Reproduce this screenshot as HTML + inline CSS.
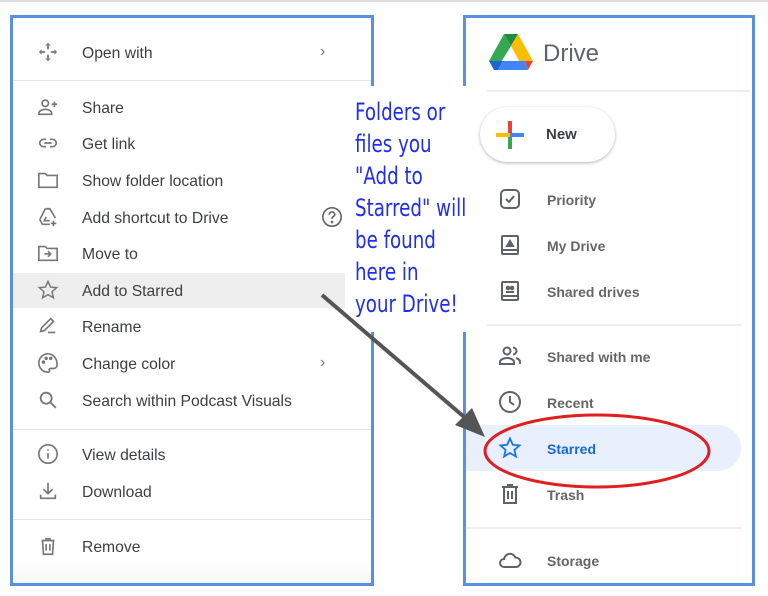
<!DOCTYPE html>
<html><head><meta charset="utf-8"><style>
*{margin:0;padding:0;box-sizing:border-box}
body{width:768px;height:596px;background:#fff;position:relative;overflow:hidden;font-family:"Liberation Sans",Arial,sans-serif}
.abs{position:absolute}
.box{position:absolute;border:3px solid #5b8fe0}
.it{position:absolute;left:82px;font-size:15.7px;color:#3c4043;line-height:18px;margin-top:2px}
.ic{position:absolute;left:37px;width:22px;height:22px;margin-top:1px}
.hr{position:absolute;height:1px;background:#e3e3e3}
.ri{position:absolute;left:547px;font-size:14px;color:#666;font-weight:bold;line-height:18px}
.rc{position:absolute;left:498px;width:24px;height:24px}
.hw{position:absolute;left:355px;font-family:"DejaVu Sans",cursive;font-size:24px;color:#1f2ef0;line-height:32px;transform:scaleX(.76);transform-origin:left;white-space:nowrap}
svg{overflow:visible}
</style></head><body>
<div class="abs" style="left:0;top:0;width:768px;height:2px;background:#ddd"></div>

<div class="box" style="left:10px;top:15px;width:364px;height:571px"></div>
<div class="abs" style="left:13px;top:560px;width:358px;height:23px;background:linear-gradient(#fff,#f6f6f6)"></div>
<div class="box" style="left:463px;top:15px;width:292px;height:571px"></div>

<!-- left menu -->
<div class="abs" style="left:13px;top:273px;width:332px;height:35px;background:#eeeeee"></div>
<div class="hr" style="left:13px;top:80px;width:358px"></div>
<div class="hr" style="left:13px;top:429px;width:358px"></div>
<div class="hr" style="left:13px;top:519px;width:358px"></div>

<svg class="ic" style="top:40px" viewBox="0 0 24 24" fill="#777"><path d="M12 2l3 3h-2v4h-2V5H9zM12 22l-3-3h2v-4h2v4h2zM2 12l3-3v2h4v2H5v2zM22 12l-3 3v-2h-4v-2h4V9z"/></svg>
<div class="it" style="top:43px">Open with</div>
<div class="abs" style="left:320px;top:43px;color:#777;font-size:16px">›</div>
<svg class="ic" style="top:95px" viewBox="0 0 24 24" fill="none" stroke="#777" stroke-width="1.8"><circle cx="9" cy="8" r="3.5"/><path d="M2 19c0-3 4-4.5 7-4.5s7 1.5 7 4.5v1H2z"/><path d="M19 6v6M16 9h6"/></svg>
<div class="it" style="top:98px">Share</div>
<svg class="ic" style="top:131px" viewBox="0 0 24 24" fill="none" stroke="#777" stroke-width="1.8"><path d="M10 8H7a4 4 0 000 8h3M14 8h3a4 4 0 010 8h-3M8 12h8"/></svg>
<div class="it" style="top:134px">Get link</div>
<svg class="ic" style="top:168px" viewBox="0 0 24 24" fill="none" stroke="#777" stroke-width="1.8"><path d="M2 5h7l2 2h11v13H2z"/></svg>
<div class="it" style="top:171px">Show folder location</div>
<svg class="ic" style="top:205px" viewBox="0 0 24 24" fill="none" stroke="#777" stroke-width="1.8"><path d="M9 3h5l6 10M3 15l6-12M3 15l3 5h8M18 16v6M15 19h6M10 12l-2 4h6"/></svg>
<div class="it" style="top:208px">Add shortcut to Drive</div>
<svg class="abs" style="left:321px;top:206px" width="22" height="22" viewBox="0 0 24 24" fill="none" stroke="#666" stroke-width="1.8"><circle cx="12" cy="12" r="10"/><path d="M9 9.5a3 3 0 116 0c0 2-3 2-3 4.5"/><circle cx="12" cy="17.5" r=".6" fill="#666"/></svg>
<svg class="ic" style="top:241px" viewBox="0 0 24 24" fill="none" stroke="#777" stroke-width="1.8"><path d="M2 5h7l2 2h11v13H2z"/><path d="M8 13h7M12 10l3 3-3 3"/></svg>
<div class="it" style="top:244px">Move to</div>
<svg class="ic" style="top:278px" viewBox="0 0 24 24" fill="none" stroke="#777" stroke-width="1.6"><path d="M12 2.5l2.8 6.3 6.7.6-5.1 4.5 1.5 6.6L12 17l-5.9 3.5 1.5-6.6-5.1-4.5 6.7-.6z"/></svg>
<div class="it" style="top:281px">Add to Starred</div>
<svg class="ic" style="top:314px" viewBox="0 0 24 24" fill="none" stroke="#777" stroke-width="1.8"><path d="M4 18l1-4L15 4l3 3L8 17zM12 19h8" /></svg>
<div class="it" style="top:317px">Rename</div>
<svg class="ic" style="top:351px" viewBox="0 0 24 24" fill="none" stroke="#777" stroke-width="1.8"><path d="M12 2a10 10 0 000 20c1.5 0 2-1 1.5-2s0-2 1.5-2h3a4 4 0 004-4C22 7 17.5 2 12 2z"/><circle cx="7" cy="11" r="1" fill="#777"/><circle cx="10" cy="7" r="1" fill="#777"/><circle cx="15" cy="7" r="1" fill="#777"/></svg>
<div class="it" style="top:354px">Change color</div>
<div class="abs" style="left:320px;top:354px;color:#777;font-size:16px">›</div>
<svg class="ic" style="top:388px" viewBox="0 0 24 24" fill="none" stroke="#777" stroke-width="2"><circle cx="10" cy="10" r="6"/><path d="M14.5 14.5l6 6"/></svg>
<div class="it" style="top:391px">Search within Podcast Visuals</div>
<svg class="ic" style="top:442px" viewBox="0 0 24 24" fill="none" stroke="#777" stroke-width="1.8"><circle cx="12" cy="12" r="10"/><path d="M12 11v6M12 7v1.5"/></svg>
<div class="it" style="top:445px">View details</div>
<svg class="ic" style="top:479px" viewBox="0 0 24 24" fill="none" stroke="#777" stroke-width="1.8"><path d="M12 3v11M7 10l5 5 5-5M4 16v4h16v-4"/></svg>
<div class="it" style="top:482px">Download</div>
<svg class="ic" style="top:534px" viewBox="0 0 24 24" fill="none" stroke="#777" stroke-width="1.8"><path d="M5 6h14M9 4h6M6 6l1 15h10l1-15M10 10v7M14 10v7"/></svg>
<div class="it" style="top:537px">Remove</div>

<!-- right panel -->
<svg class="abs" style="left:489px;top:34px" width="44" height="40" viewBox="0 0 44 40">
<polygon points="15,0 29,0 22,12" fill="#1e8e3e"/>
<polygon points="15,0 22,12 9,33 0,27" fill="#34a853"/>
<polygon points="29,0 44,27 30,27 22,12" fill="#fbbc04"/>
<polygon points="0,27 14,27 9,36 5,36" fill="#1967d2"/>
<polygon points="14,27 36,27 39,36 9,36" fill="#4285f4"/>
<polygon points="36,27 44,27 39,36" fill="#ea4335"/>
</svg>
<div class="abs" style="left:543px;top:40px;font-size:24px;color:#5f6368">Drive</div>
<div class="hr" style="left:487px;top:90px;width:263px;height:2px;background:#eee"></div>

<!-- annotation white cover -->
<div class="abs" style="left:348px;top:86px;width:139px;height:246px;background:#fff"></div>
<div class="hw" style="top:96px">Folders or</div>
<div class="hw" style="top:128px">files you</div>
<div class="hw" style="top:160px">"Add to</div>
<div class="hw" style="top:192px">Starred" will</div>
<div class="hw" style="top:224px">be found</div>
<div class="hw" style="top:256px">here in</div>
<div class="hw" style="top:288px">your Drive!</div>

<div class="abs" style="left:480px;top:107px;width:135px;height:55px;border-radius:28px;background:#fff;box-shadow:0 1px 3px rgba(0,0,0,.3)"></div>
<svg class="abs" style="left:496px;top:121px" width="28" height="28" viewBox="0 0 28 28"><rect x="12" y="0" width="4" height="14" fill="#ea4335"/><rect x="12" y="14" width="4" height="14" fill="#34a853"/><rect x="0" y="12" width="14" height="4" fill="#fbbc04"/><rect x="14" y="12" width="14" height="4" fill="#4285f4"/></svg>
<div class="abs" style="left:546px;top:126px;font-size:15px;font-weight:bold;color:#3c4043">New</div>

<svg class="rc" style="top:187px" viewBox="0 0 24 24" fill="none" stroke="#5f6368" stroke-width="2"><rect x="3" y="3" width="18" height="18" rx="4"/><path d="M8 12l3 3 5-6"/></svg>
<div class="ri" style="top:191px">Priority</div>
<svg class="rc" style="top:233px" viewBox="0 0 24 24" fill="none" stroke="#5f6368" stroke-width="2"><rect x="4" y="3" width="16" height="18" rx="1"/><path d="M4 17h16"/><path d="M9 13l3-5 3 5z" fill="#5f6368"/></svg>
<div class="ri" style="top:237px">My Drive</div>
<svg class="rc" style="top:279px" viewBox="0 0 24 24" fill="none" stroke="#5f6368" stroke-width="2"><rect x="4" y="3" width="16" height="18" rx="1"/><path d="M4 17h16"/><circle cx="10" cy="9" r="1.3" fill="#5f6368"/><circle cx="14" cy="9" r="1.3" fill="#5f6368"/><path d="M8 13h8"/></svg>
<div class="ri" style="top:283px">Shared drives</div>
<div class="hr" style="left:487px;top:324px;width:255px;height:2px;background:#eee"></div>
<svg class="rc" style="top:344px" viewBox="0 0 24 24" fill="none" stroke="#5f6368" stroke-width="2"><circle cx="9" cy="7" r="3.5"/><path d="M2 20v-2c0-2.5 4-4 7-4s7 1.5 7 4v2z"/><path d="M15 3.5a3.5 3.5 0 010 7M18 14c2 .7 4 2 4 4v2"/></svg>
<div class="ri" style="top:348px">Shared with me</div>
<svg class="rc" style="top:390px" viewBox="0 0 24 24" fill="none" stroke="#5f6368" stroke-width="2"><circle cx="12" cy="12" r="10"/><path d="M12 6v6l4 3"/></svg>
<div class="ri" style="top:394px">Recent</div>
<div class="abs" style="left:466px;top:425px;width:275px;height:46px;background:#e8f0fe;border-radius:0 23px 23px 0"></div>
<svg class="rc" style="top:436px" viewBox="0 0 24 24" fill="none" stroke="#1a73e8" stroke-width="1.8"><path d="M12 2.5l2.8 6.3 6.7.6-5.1 4.5 1.5 6.6L12 17l-5.9 3.5 1.5-6.6-5.1-4.5 6.7-.6z"/></svg>
<div class="ri" style="top:440px;color:#1967d2">Starred</div>
<svg class="rc" style="top:482px" viewBox="0 0 24 24" fill="none" stroke="#5f6368" stroke-width="2"><path d="M4 5h16M9 3h6M6 5v16h12V5M10 9v8M14 9v8"/></svg>
<div class="ri" style="top:486px">Trash</div>
<div class="hr" style="left:466px;top:527px;width:276px;height:2px;background:#eee"></div>
<svg class="rc" style="top:548px" viewBox="0 0 24 24" fill="none" stroke="#5f6368" stroke-width="2"><path d="M6 19a4 4 0 010-8 6 6 0 0111.5-1.5A4.5 4.5 0 0118 19z"/></svg>
<div class="ri" style="top:552px">Storage</div>

<!-- arrow & ellipse -->
<svg class="abs" style="left:0;top:0" width="768" height="596">
<line x1="322" y1="295" x2="470" y2="422" stroke="#555" stroke-width="4"/>
<polygon points="485,437 455,425 472,408" fill="#555"/>
<ellipse cx="597" cy="451" rx="112" ry="36" fill="none" stroke="#e02020" stroke-width="3"/>
</svg>
</body></html>
